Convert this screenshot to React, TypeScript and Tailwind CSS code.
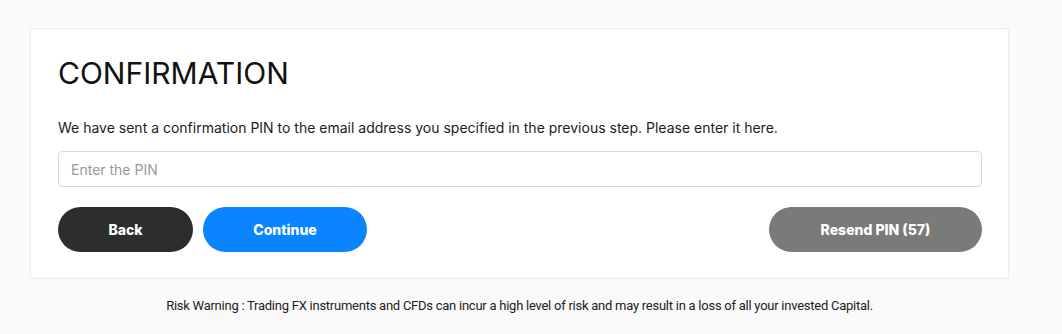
export default function App() {
  return (
    <div className="min-h-[334px] w-full bg-[#fafafa] font-['Inter',sans-serif]">
      <div className="pt-[28px] pl-[30px] pr-[53px]">
        <div className="w-[979px] h-[251px] rounded-[2px] border border-[#ececec] bg-white px-[27px] pt-[26px]">
          <h1 className="text-[30px] leading-[36px] font-normal text-[#111]">CONFIRMATION</h1>
          <p className="mt-[27px] text-[14px] leading-[20px] text-[#222]">
            We have sent a confirmation PIN to the email address you specified in the previous step. Please enter it here.
          </p>
          <input
            type="text"
            placeholder="Enter the PIN"
            className="mt-[13px] block h-[36px] w-[924px] rounded-[4px] border border-[#d9d9d9] px-[12px] text-[14px] text-[#333] placeholder:text-[#9a9a9a] outline-none"
          />
          <div className="mt-[20px] flex w-[924px] items-center">
            <button className="h-[45px] w-[135px] rounded-full bg-[#2d2d2d] text-[14px] font-extrabold text-white">Back</button>
            <button className="ml-[10px] h-[45px] w-[164px] rounded-full bg-[#0b84ff] text-[14px] font-extrabold text-white">Continue</button>
            <button className="ml-auto h-[45px] w-[213px] rounded-full bg-[#7a7a7a] text-[14px] font-extrabold text-white">Resend PIN (57)</button>
          </div>
        </div>
      </div>
      <p className="mt-[19px] w-[1039px] text-center font-['Roboto',sans-serif] text-[13px] leading-[16px] tracking-[-0.25px] text-[#222]">
        Risk Warning : Trading FX instruments and CFDs can incur a high level of risk and may result in a loss of all your invested Capital.
      </p>
    </div>
  );
}
